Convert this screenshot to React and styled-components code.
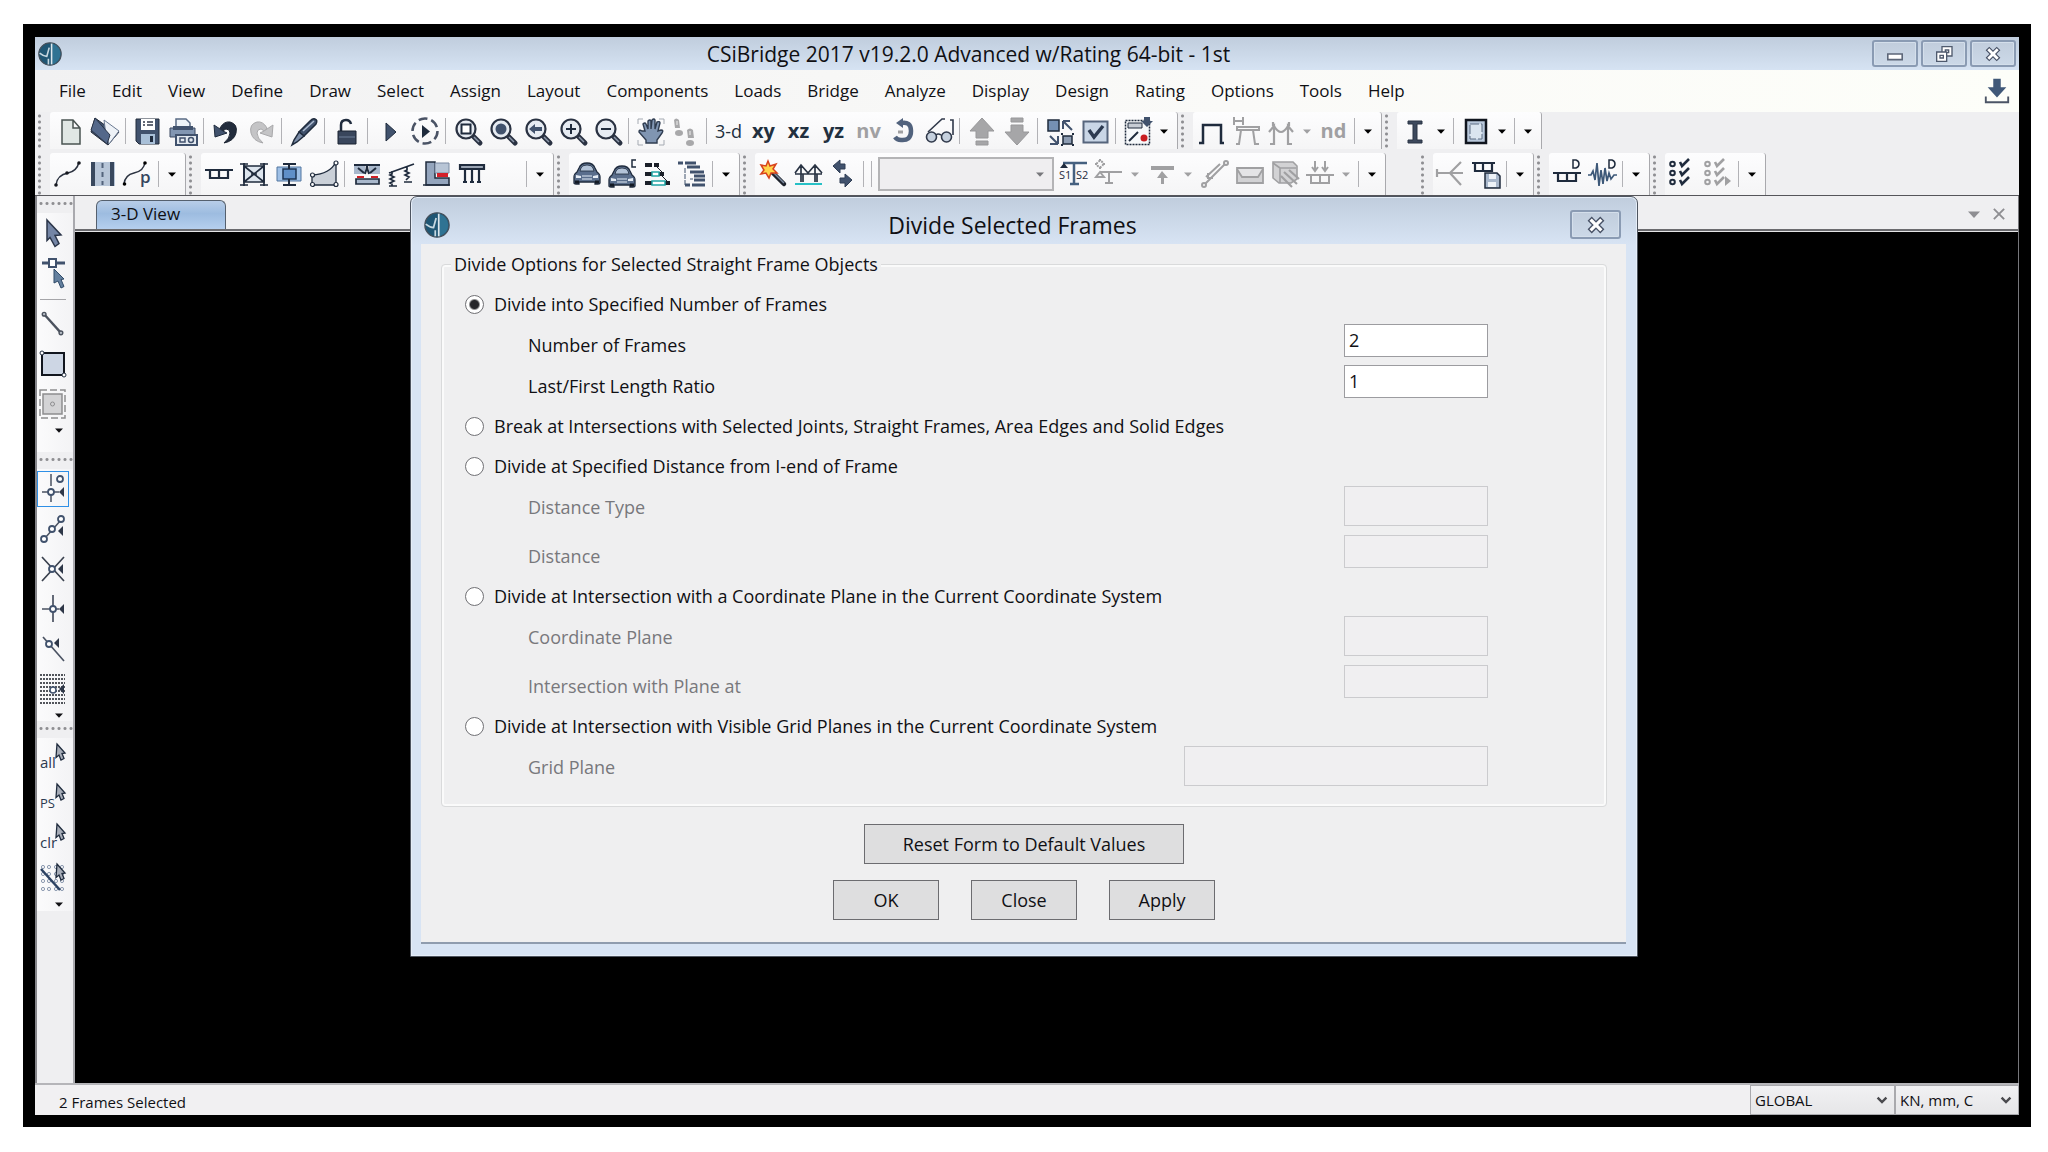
import React, { useState } from 'react';
import styled, { createGlobalStyle, css } from 'styled-components';

const ink = '#1f2b3d';
const navy = '#41526d';
const steel = '#a9b8cc';
const grey = '#a0a0a2';

const GlobalStyle = createGlobalStyle`
    * { box-sizing: border-box; }
    body {
        margin: 0;
        background: #fff;
        color: #101014;
        font-family: "Open Sans", "Noto Sans", sans-serif;
        font-size: 17px;
    }
    button, input, select { font: inherit; color: inherit; }
`

/* ---------- icons, all on a 30 x 30 grid ---------- */

const lens = (
    <>
        <path d="M20 20l7 7" stroke="#2a3242" strokeWidth="5" strokeLinecap="round" />
        <path d="M21 21l5 5" stroke="#8b97aa" strokeWidth="1.5" />
        <circle cx="13" cy="13" r="9.5" fill="#e6ebf2" stroke="#2a3242" strokeWidth="2.2" />
    </>
)
const car = (
    <>
        <path d="M7 9q2-5 8-5t8 5l2 4q3 2 3 5v6q0 1-2 1h-3v-2H7v2H4q-2 0-2-1v-6q0-3 3-5z" fill="#5a6e8c" stroke={ink} strokeWidth="1.300" />
        <path d="M9 9q1-3 6-3t6 3l1 3H8z" fill="#b3c3d8" stroke={ink} strokeWidth=".8" />
        <path d="M4 16l5 1v2H4zM26 16l-5 1v2h5z" fill="#e6edf5" />
        <path d="M10 17h10M10 20h10" stroke="#b6c3d4" strokeWidth="1.300" />
        <path d="M3 23h4M23 23h4" stroke="#141a24" strokeWidth="3" />
    </>
)
const deck = (
    <g fill="none" stroke={ink} strokeWidth="2.2">
        <path d="M1 11h28M6 11v8h18v-8M15 11v8" />
    </g>
)
const cursor = <path d="M19 1l8 9-3 .5 2 5-3 1.500-2-5-3 2.500z" fill="#a7adb8" stroke={ink} strokeWidth="1.3" />
const tri = x => <path d={`M${x} 15l5-5v10z`} fill="#2e3748" />
const checks = c => (
    <g fill="none" stroke={c} strokeWidth="2">
        {[5, 14, 23].map(y => (
            <g key={y}>
                <circle cx="4.500" cy={y} r="2.300" />
                <path d={`M12 ${y - 2}l2 4 7-7`} strokeWidth="2.600" />
            </g>
        ))}
    </g>
)

const icons = {
    file: <path d="M7 4h11l7 8v16H7zM18 4v8h7" fill="#e0e7e4" stroke="#4a5452" strokeWidth="1.500" />,
    open: (
        <>
            <path d="M5 2l14 10 10 4-11 13L1 16z" fill={navy} stroke="#232c3b" />
            <path d="M14 4l15 11-10 13-3-9z" fill="#eef2f7" stroke="#6b7a92" />
            <path d="M5 2L1 14l16 14 3-9z" fill="#54688a" stroke="#2a3548" />
        </>
    ),
    save: (
        <>
            <path d="M3 3h23v25H6l-3-3z" fill={navy} stroke="#222c3c" />
            <path d="M8 3h14v11H8z" fill="#fff" />
            <path d="M10 6h2m2 0h6M10 9h2m2 0h6" stroke="#30394a" strokeWidth="1.500" />
            <path d="M8 18h14v10H8z" fill="#a9c0d8" />
            <path d="M17 20h3v6h-3z" fill={ink} />
        </>
    ),
    print: (
        <>
            <path d="M8 13V3h10l4 4v6" fill="#eef3f8" stroke="#5a6b84" strokeWidth="1.500" />
            <path d="M2 12h25v9H2z" fill="#8296b2" stroke="#3a4960" />
            <path d="M5 10h20v4H5z" fill={navy} />
            <path d="M8 19h21v10H8z" fill="#e4eaf1" stroke={navy} strokeWidth="2" />
            <path d="M12 22h5v4h-5z" fill="none" stroke={navy} strokeWidth="1.500" />
            <circle cx="23" cy="24" r="2.500" fill="none" stroke={navy} strokeWidth="1.500" />
        </>
    ),
    undo: (
        <>
            <path d="M9 12q4-7 10-6 8 2 6 11-2 8-12 10 6-5 6-10 0-4-4-4-2 0-3 3z" fill="#222c3c" stroke="#1a2230" />
            <path d="M3 9l1 12 12-4-4-2-3-2z" fill={navy} stroke={ink} />
        </>
    ),
    redo: (
        <>
            <path d="M21 12q-4-7-10-6-8 2-6 11 2 8 12 10-6-5-6-10 0-4 4-4 2 0 3 3z" fill="#c4c4c6" stroke="#a9a9ab" />
            <path d="M27 9l-1 12-12-4 4-2 3-2z" fill="#c4c4c6" stroke="#a9a9ab" />
        </>
    ),
    pen: (
        <>
            <path d="M26 3q3 1 1 5L15 20l-5-4L21 5q3-3 5-2z" fill={navy} stroke={ink} strokeWidth="1.500" />
            <path d="M10 16l5 4-7 6-5 3 2-5z" fill="#7c8da8" stroke={ink} strokeWidth="1.500" />
            <path d="M14 15L25 5" stroke="#aebdd2" strokeWidth="1.500" />
        </>
    ),
    lock: (
        <>
            <path d="M9 15V9q0-5 5-5 4 0 5 4" fill="none" stroke={ink} strokeWidth="2.500" />
            <path d="M6 15h18v13H6z" fill="#39465c" stroke="#1a2230" />
            <path d="M7 21h16" stroke="#6f7f98" />
        </>
    ),
    play: <path d="M11 7l10 9-10 9z" fill={navy} stroke={ink} />,
    playRing: (
        <>
            <circle cx="15" cy="15" r="12.500" fill="none" stroke="#4a5365" strokeWidth="2.500" strokeDasharray="9 4" />
            <path d="M12 9l8 6.500-8 6.500z" fill={ink} />
        </>
    ),
    zoomBox: <>{lens}<path d="M8.500 8.500h9v9h-9z" fill="#fff" stroke={ink} strokeWidth="2" /></>,
    zoomDot: <>{lens}<circle cx="13" cy="13" r="5.500" fill={navy} /></>,
    zoomBack: <>{lens}<path d="M6 13l6-5v3h7v4h-7v3z" fill={navy} /></>,
    zoomIn: <>{lens}<path d="M8 13h10M13 8v10" stroke={ink} strokeWidth="2" /></>,
    zoomOut: <>{lens}<path d="M8 13h10" stroke={ink} strokeWidth="2" /></>,
    hand: (
        <>
            <path d="M2 8V3h5M23 3h5v5M28 24v5h-5M7 29H2v-5" fill="none" stroke="#a5aab2" />
            <path d="M9 15L7 8q2-2 3 0l2 5V5q2-2 3 0v8l1-9q2-2 3 0v9l2-7q3-1 3 1l-2 8 3-1q3 0 1 3l-5 7v3H10v-3l-7-8q0-3 3-1z" fill="#8095b2" stroke="#2f3c50" strokeWidth="1.400" />
        </>
    ),
    feet: (
        <g fill="#a8a8aa">
            <path d="M3 4q2-3 5 0l1 8H4zM16 14q3-3 6 0l1 8h-6z" />
            <ellipse cx="8" cy="17" rx="4" ry="3" />
            <ellipse cx="19" cy="27" rx="4" ry="3" />
            <path d="M6 5v4M19 15v4" stroke="#f0f0f0" />
        </g>
    ),
    rotate: (
        <>
            <path d="M12 7q10-2 10 8t-10 9q-4 0-6-3" fill="none" stroke="#51627d" strokeWidth="4.500" />
            <path d="M14 2v10L7 7z" fill="#51627d" />
            <path d="M9 16h5" stroke={grey} strokeWidth="3" />
        </>
    ),
    glasses: (
        <g stroke="#30394a" strokeWidth="1.600">
            <path d="M4 16L18 3h3M29 19V4h-3M12 19q2-2 5 0" fill="none" />
            <circle cx="7.500" cy="21" r="5" fill="#c6d1de" />
            <circle cx="22.500" cy="21" r="5" fill="#c6d1de" />
        </g>
    ),
    up: (
        <g fill="#a6a6a8" stroke="#98989a">
            <path d="M15 2l12 13h-6v7H9v-7H3z" />
            <path d="M9 25h12v4H9z" />
        </g>
    ),
    down: (
        <g fill="#a6a6a8" stroke="#98989a">
            <path d="M15 29l12-13h-6V9H9v7H3z" />
            <path d="M9 2h12v4H9z" />
        </g>
    ),
    assign: (
        <>
            <path d="M3 4h11v11H3z" fill="#7590b3" stroke={ink} strokeWidth="1.500" />
            <path d="M18 20h9v8h-9z" fill="#8d9cb2" stroke={ink} strokeWidth="1.500" />
            <path d="M18 5h7M18 5v8M19 6l8 8M5 20l8 8M13 28H5M13 28v-8" fill="none" stroke={navy} strokeWidth="2" />
            <path d="M16 18h2M27 18h2M16 29h2M27 29h2" stroke={ink} strokeWidth="2" />
        </>
    ),
    check: (
        <>
            <path d="M3.500 5.500h24v21h-24z" fill="#c9d6e6" stroke="#56657c" strokeWidth="2" />
            <path d="M9 14l5 7 9-11" fill="none" stroke="#2c3a50" strokeWidth="3.500" />
        </>
    ),
    display: (
        <>
            <path d="M2.500 4.500h24v24h-24z" fill="#f7f9fb" stroke={ink} strokeWidth="1.500" strokeDasharray="2 1" />
            <path d="M5 7h14v5H5z" fill="#c7ccd4" stroke={ink} />
            <path d="M6 25l9-9" stroke={ink} strokeWidth="2" />
            <circle cx="21" cy="22" r="3.500" fill="#c81e22" />
            <path d="M21 1h6v4h3l-6 6-6-6h3z" fill={navy} />
        </>
    ),
    portal: <path d="M3 27h4V9h18v18h3" fill="none" stroke={ink} strokeWidth="2.500" />,
    portalDim: (
        <g fill="none" stroke={grey} strokeWidth="2">
            <path d="M5 28h3l2-14h12l2 14h4M6 11h22v3H6z" />
            <path d="M3 1v8M12 1v8M3 5h9" />
        </g>
    ),
    portalSag: <path d="M4 28h4V10L3 16M26 28h-4V10l5 6M8 10q7 12 14 0M7 6v4M23 6v4" fill="none" stroke={grey} strokeWidth="2.200" />,
    ibeam: <path d="M8 5h14v3h-5v16h5v3H8v-3h5V8H8z" fill="#3d495c" stroke="#2a3444" />,
    plate: (
        <>
            <path d="M5 4h20v23H5z" fill="#b9c8db" stroke="#10151e" strokeWidth="2.500" />
            <path d="M9 8h12v15H9z" fill="#dbe5ef" stroke="#5d6c82" strokeDasharray="9 2" />
        </>
    ),
    curve: (
        <>
            <path d="M3 26q1-10 12-12 9-2 11-11" fill="none" stroke="#2b3240" strokeWidth="1.500" />
            <g fill="#16181f"><circle cx="3" cy="26" r="1.800" /><circle cx="14" cy="14" r="1.800" /><circle cx="26" cy="4" r="1.800" /></g>
        </>
    ),
    road: (
        <>
            <path d="M3 3h24v24H3z" fill="#b8c6d8" />
            <path d="M5 3v24M24 3v24" stroke="#39485e" strokeWidth="4" />
            <path d="M14.500 4v22" stroke="#53637b" strokeWidth="2" strokeDasharray="5 4" />
        </>
    ),
    curveP: (
        <>
            <path d="M1 25q1-9 10-11 10-2 11-11" fill="none" stroke="#2b3240" strokeWidth="1.500" />
            <circle cx="1.500" cy="25" r="1.800" /><circle cx="22" cy="4" r="1.800" />
            <text x="17" y="24" fontSize="17" fontWeight="600" fill="#35455e">p</text>
        </>
    ),
    deck,
    brace: (
        <g fill="none" stroke={ink} strokeWidth="1.700">
            <path d="M5 7h20v16H5zM5 7l20 16M25 7L5 23" fill="#dde5ee" />
            <path d="M5 4v23M25 4v23M1 5h8M21 5h8M1 26h8M21 26h8M12 15h6" />
        </g>
    ),
    segment: (
        <>
            <path d="M3 8h24v14H3z" fill="#9fc0e6" stroke="#5376a0" />
            <path d="M9 10h13v10H9z" fill="#5f8fc8" stroke="#1d3454" strokeWidth="1.500" />
            <path d="M9 5h13M9 26h13M15 5v5M15 20v6" stroke={ink} strokeWidth="2" />
        </>
    ),
    haunch: (
        <>
            <path d="M3 16q18-1 24-13v23H3z" fill="#cad0d8" stroke={ink} strokeWidth="1.300" />
            <g fill="#fff" stroke={ink} strokeWidth="1.200"><circle cx="3.500" cy="16" r="2" /><circle cx="27" cy="4" r="2" /><circle cx="3.500" cy="25.500" r="2" /><circle cx="27" cy="25.500" r="2" /></g>
        </>
    ),
    bearing: (
        <>
            <path d="M2 6h11v9H2zM17 6h11v9H17z" fill={steel} />
            <path d="M2 6h26M13 15q2-5 2-9 0 4 2 9M6 9l6 5M24 9l-6 5" fill="none" stroke={ink} strokeWidth="2" />
            <path d="M5 17h7v2H5zM19 17h7v2h-7z" fill="#cf2027" />
            <path d="M4 20h23v5H4z" fill={steel} stroke={ink} strokeWidth="1.700" />
        </>
    ),
    springs: <path d="M2 14L27 5M5 12v3l-2 1 4 2-4 2 4 2-4 2 2 1v2M20 8v3l-2 1 4 2-4 2 4 2-3 3M2 27h8M17 23h8" fill="none" stroke={ink} strokeWidth="1.700" />,
    abutment: (
        <>
            <path d="M4 3h9v16h14v7H4z" fill="#94a5bd" stroke={ink} strokeWidth="1.500" />
            <path d="M13 4h14v10H13z" fill="#b8c5d6" stroke="#7a8aa2" />
            <path d="M15 14h11v4H15z" fill="#d4202a" />
            <path d="M1 26h27" stroke={ink} strokeWidth="1.500" />
        </>
    ),
    bent: <path d="M3 6h24v4H3zM8 10v13M15 10v13M22 10v13M6 23h4M13 23h4M20 23h4" fill="#9aa4b3" stroke={ink} strokeWidth="2.200" />,
    car,
    carC: <><g transform="translate(0 3)">{car}</g><path d="M29 1h-4v7h4" fill="none" stroke={ink} strokeWidth="1.500" /></>,
    tree: (
        <>
            <path d="M3 4h7v4H3zM3 13h7v4H3zM3 22h7v4H3zM12 4h5v4h-5zM17 13h5v4h-5zM23 22h5v4h-5z" fill="#1b2029" />
            <path d="M10 13h7v4h-7zM10 22h13v4H10z" fill="#fff" stroke="#20a5a5" strokeWidth="1.500" />
            <path d="M15 8l5 5M20 17l5 5" stroke="#1b2029" />
        </>
    ),
    steps: (
        <g fill="none" stroke={navy}>
            <path d="M1 4h5M8 4h11M10 8h13M13 13h14M17 17h11M17 21h11M8 26h5M15 26h13" strokeWidth="2.800" />
            <path d="M8 9v17M13 20h3" strokeDasharray="5 1" />
        </g>
    ),
    wand: (
        <>
            <path d="M14 13l12 12" stroke="#1d222c" strokeWidth="4.500" strokeLinecap="round" />
            <path d="M15 13l11 11" stroke="#7d8ba0" strokeWidth="1.500" />
            <path d="M10 2l2 5 6-2-3 5 4 4-6 0-2 5-3-5-5 1 3-4-3-5 5 1z" fill="#ffd34a" stroke="#d8431d" strokeWidth="1.500" />
        </>
    ),
    bridge: (
        <>
            <path d="M2 15h27M8 6v17M22 6v17M2 14l6-8 7 8 7-8 7 8M10 15v8M24 15v8" fill="none" stroke="#2a3444" strokeWidth="1.700" />
            <path d="M2 25h27" stroke="#27c0c6" strokeWidth="2" />
        </>
    ),
    swap: <path d="M5 7l7-6v4h5v5h-5v4zM24 21l-7-6v4h-5v5h5v4z" fill={navy} stroke="#2f3d54" />,
    s1s2: (
        <>
            <path d="M4 4h24M15 4v20M11 25h9" stroke="#45607f" strokeWidth="2.500" />
            <path d="M1 9h8L5 4z" fill={ink} />
            <text x="0" y="20" fontSize="11" fill={ink}>S1</text>
            <text x="17" y="20" fontSize="11" fill={ink}>S2</text>
        </>
    ),
    supportNew: (
        <g fill="none" stroke={grey} strokeWidth="2">
            <circle cx="6" cy="5" r="3" strokeDasharray="2 1" /><path d="M6 0v2M6 8v2M1 5h2M9 5h2M6 13h22M15 13v10M11 24h8M2 18h8l-4-5z" />
        </g>
    ),
    pushUp: <g fill={grey}><path d="M4 7h23v4H4z" /><path d="M15 12l6 7h-4v6h-3v-6h-4z" /></g>,
    link: (
        <g fill="none" stroke={grey} strokeWidth="2">
            <path d="M5 25L25 5M6 18l14-13M8 14v5h5" /><circle cx="4" cy="26" r="2" /><circle cx="26" cy="4" r="2" />
        </g>
    ),
    tendon: (
        <g fill="#d2d2d4" stroke={grey} strokeWidth="1.800">
            <path d="M2 9h26v15H2z" /><path d="M2 10l5 8h16l5-8" fill="#e4e4e6" />
        </g>
    ),
    block: (
        <g fill="#d2d2d4" stroke={grey} strokeWidth="1.600">
            <path d="M3 8V3h20l4 4v13l-6 4H9l-6-5z" /><path d="M3 4l7 5v15M10 9h16" fill="none" /><path d="M14 13l13 12M11 17l11 11M19 11l10 9" strokeWidth="2.200" />
        </g>
    ),
    loadDown: <path d="M1 16h28M6 16v8h18v-8M15 16v8M10 2v9M20 2v9M7 8l3 4 3-4M17 8l3 4 3-4" fill="none" stroke={grey} strokeWidth="2" />,
    fork: <path d="M1 14h13L25 3M14 14l11 12M14 14h13M1 10v8" fill="none" stroke={grey} strokeWidth="2.200" />,
    deckSave: (
        <>
            <path d="M1 4h23M4 4v8h17V4M12 4v8" fill="none" stroke={ink} strokeWidth="2.200" />
            <path d="M14 14h12l3 3v12H14z" fill={steel} stroke={ink} strokeWidth="1.500" />
            <path d="M18 15h7v5h-7zM17 23h8v5h-8z" fill="#eef3f8" />
        </>
    ),
    deckD: <><g transform="translate(0 3)">{deck}</g><path d="M21 1h3q3 1 3 4t-3 4h-3z" fill="none" stroke={ink} strokeWidth="1.500" /></>,
    waveD: (
        <>
            <path d="M1 16h3l2-4 2 9 2-17 2 23 2-16 2 14 2-16 2 13 2-8 2 6 3-4h3" fill="none" stroke="#3d5878" strokeWidth="1.700" />
            <path d="M22 1h3q3 1 3 4t-3 4h-3z" fill="none" stroke={ink} strokeWidth="1.500" />
        </>
    ),
    checks: checks(ink),
    checksDim: <>{checks(grey)}<path d="M22 17l6 5-6 5z" fill={grey} /></>,

    select: <path d="M9 2l14 15-6 .5 4 8-4 3-5-9-3 3z" fill="#7485a5" stroke="#2a3448" strokeWidth="1.500" />,
    reshape: (
        <>
            <path d="M4 5h23" stroke={navy} strokeWidth="3" />
            <path d="M11 1h7v8h-7z" fill="#fff" stroke={navy} strokeWidth="2" />
            <path d="M16 11l10 10-3 .5 3 7-3 1.500-3-7-4 2z" fill="#64809f" stroke="#2f4a68" />
        </>
    ),
    frame: (
        <g stroke="#4b525e" strokeWidth="2.500">
            <path d="M6 5l17 19" /><g fill="#b7bdc6" strokeWidth="1.500"><circle cx="5.500" cy="4.500" r="2" /><circle cx="23.500" cy="24.500" r="2" /></g>
        </g>
    ),
    area: (
        <>
            <path d="M4 4h22v22H4z" fill="#cdd6e4" stroke="#12161e" strokeWidth="2" />
            <g fill="#fff" stroke={ink}><circle cx="4" cy="4" r="2" /><circle cx="26" cy="26" r="2" /></g>
        </>
    ),
    areaDim: (
        <>
            <path d="M2 1h25v28H2z" fill="none" stroke="#8d8d8f" strokeWidth="1.500" strokeDasharray="7 3" />
            <path d="M5 5h19v20H5z" fill="#d3d3d5" stroke="#8d8d8f" strokeWidth="1.500" />
            <circle cx="14.500" cy="15" r="2" fill="none" stroke="#8d8d8f" />
        </>
    ),
    snapJoint: (
        <>
            <path d="M13 0v12M13 20v8M4 18h6M16 18h5" stroke="#4a5262" strokeWidth="1.500" />
            <g fill="#fff" stroke={navy} strokeWidth="1.800"><circle cx="13" cy="18" r="3" /><circle cx="22" cy="5" r="3" /></g>
            <g transform="translate(0 3)">{tri(21)}</g>
        </>
    ),
    snapEnds: (
        <>
            <path d="M7 24l16-18" stroke="#4a5262" strokeWidth="1.500" />
            <g fill="#fff" stroke={navy} strokeWidth="1.800"><circle cx="6" cy="25" r="3" /><circle cx="14" cy="15" r="3" /><circle cx="23" cy="5" r="3" /></g>
            <g transform="translate(0 2)">{tri(20)}</g>
        </>
    ),
    snapCross: <><path d="M4 3l22 24M26 3L4 27" stroke="#3b424f" strokeWidth="1.700" /><circle cx="14" cy="15" r="3" fill="#fff" stroke={navy} strokeWidth="1.800" />{tri(20)}</>,
    snapPerp: <><path d="M4 15h8M15 1v27M18 15h3" stroke="#4a5262" strokeWidth="1.700" /><circle cx="15" cy="15" r="3" fill="#fff" stroke={navy} strokeWidth="1.800" />{tri(21)}</>,
    snapLine: <><path d="M5 3l21 24" stroke="#4a5262" strokeWidth="1.700" /><circle cx="11" cy="10" r="3" fill="#fff" stroke={navy} strokeWidth="1.800" /><g transform="translate(0 -6)">{tri(16)}</g></>,
    snapGrid: (
        <>
            <g stroke="#1b1f27" strokeWidth="1.400" strokeDasharray="2 1">
                {[1, 5, 9, 13, 17, 21, 25, 29].map(y => <path key={y} d={`M2 ${y}h25`} />)}
            </g>
            <circle cx="15" cy="16" r="3" fill="#fff" stroke={navy} strokeWidth="1.500" />{tri(21)}
        </>
    ),
    all: <>{cursor}<text x="2" y="25" fontSize="15" fill="#2c3a50">all</text></>,
    ps: <>{cursor}<text x="2" y="25" fontSize="13" fill="#2c3a50">PS</text></>,
    clr: <>{cursor}<text x="2" y="25" fontSize="15" fill="#2c3a50">clr</text></>,
    deselect: (
        <>
            <g fill="none" stroke="#8c9ab0">
                {[4, 11, 18, 26].map(y => [5, 11, 18, 24].map(x => <circle key={x + '-' + y} cx={x} cy={y} r="1.600" />))}
            </g>
            <path d="M3 6l19 21" stroke="#2c4262" strokeWidth="2.500" />
            {cursor}
        </>
    ),
    logo: (
        <>
            <circle cx="15" cy="15" r="14" fill="#1f5674" stroke="#46515c" strokeWidth="1.500" />
            <path d="M18 2q10 4 10 13t-10 13z" fill="#2f7393" />
            <path d="M17 2v26" stroke="#dce8ee" strokeWidth="2" />
            <path d="M2 14q5 4 9 4L14 7M13 21v7" fill="none" stroke="#c6d8e1" strokeWidth="2" />
        </>
    ),
    min: <path d="M6 15h18v7H6z" fill="#fff" stroke="#5c6678" strokeWidth="2" />,
    restore: (
        <g fill="#fff" stroke="#4f5a6d" strokeWidth="2">
            <path d="M12 4h15v14H12z" /><path d="M17 9h5v4h-5z" /><path d="M4 12h15v14H4z" /><path d="M9 17h5v4H9z" />
        </g>
    ),
    close: (
        <>
            <path d="M7 7l16 16M23 7L7 23" stroke="#465064" strokeWidth="11" strokeLinecap="square" />
            <path d="M7 7l16 16M23 7L7 23" stroke="#fff" strokeWidth="6" strokeLinecap="square" />
        </>
    ),
    download: (
        <>
            <path d="M11 2h8v9h6L15 22 5 11h6z" fill="#405878" />
            <path d="M3 21v6h24v-6" fill="none" stroke="#4c5566" strokeWidth="2" />
        </>
    ),
    thinX: <path d="M4 4l22 22M26 4L4 26" stroke="#8e8e92" strokeWidth="4" />,
    caret: <path d="M0 9h30L15 25z" fill="currentColor" />,
    chevron: <path d="M4 9l11 11L26 9" fill="none" stroke="#4a4a4e" strokeWidth="6" />,
}

const Icon = ({ name, size = 30 }) => (
    <svg width={size} height={size} viewBox="0 0 30 30" overflow="visible" aria-hidden="true">{icons[name]}</svg>
)

/* ---------- toolbar contents ---------- */
// '|' separator, 'v' drop-down arrow, 'v-' disabled arrow, '_' empty slot, '=text' text button

const topRow = [
    ['file', 'open', '|', 'save', 'print', '|', 'undo', 'redo', '|', 'pen', '|', 'lock', '|', 'play', 'playRing', '|',
        'zoomBox', 'zoomDot', 'zoomBack', 'zoomIn', 'zoomOut', '|', 'hand', 'feet', '|', '=3-d', '=xy', '=xz', '=yz', '=nv',
        'rotate', 'glasses', '|', 'up', 'down', '|', 'assign', 'check', '|', 'display', 'v'],
    ['portal', 'portalDim', 'portalSag', 'v-', '=nd', '|', 'v'],
    ['ibeam', 'v', '|', 'plate', 'v', '|', 'v'],
]

const bottomRow = [
    ['curve', 'road', 'curveP', '|', 'v'],
    ['deck', 'brace', 'segment', 'haunch', '|', 'bearing', 'springs', 'abutment', 'bent', '_', '|', 'v'],
    ['car', 'carC', 'tree', 'steps', '|', 'v'],
    ['wand', 'bridge', 'swap', '|', '|', 'combo', 's1s2', 'supportNew', 'v-', 'pushUp', 'v-', 'link', 'tendon', 'block', 'loadDown', 'v-', '|', 'v'],
    ['fork', 'deckSave', '|', 'v'],
    ['deckD', 'waveD', '|', 'v'],
    ['checks', 'checksDim', '|', 'v'],
]

const menus = ['File', 'Edit', 'View', 'Define', 'Draw', 'Select', 'Assign', 'Layout', 'Components', 'Loads', 'Bridge',
    'Analyze', 'Display', 'Design', 'Rating', 'Options', 'Tools', 'Help']

const options = [
    { id: 'number', label: 'Divide into Specified Number of Frames', fields: [
        { label: 'Number of Frames', value: '2' },
        { label: 'Last/First Length Ratio', value: '1' },
    ] },
    { id: 'break', label: 'Break at Intersections with Selected Joints, Straight Frames, Area Edges and Solid Edges', fields: [] },
    { id: 'distance', label: 'Divide at Specified Distance from I-end of Frame', fields: [
        { label: 'Distance Type', select: true },
        { label: 'Distance', value: '' },
    ] },
    { id: 'plane', label: 'Divide at Intersection with a Coordinate Plane in the Current Coordinate System', fields: [
        { label: 'Coordinate Plane', select: true },
        { label: 'Intersection with Plane at', value: '' },
    ] },
    { id: 'grid', label: 'Divide at Intersection with Visible Grid Planes in the Current Coordinate System', fields: [
        { label: 'Grid Plane', select: true, wide: true },
    ] },
]

const Items = ({ items }) => items.map((item, i) => {
    if (item === '|') return <Separator key={i} />
    if (item === '_') return <Slot key={i} />
    if (item === 'combo') return <Combo key={i}><select disabled aria-label="Stage" /><Icon name="caret" size={8} /></Combo>
    if (item[0] === 'v') return <Drop key={i} $off={item === 'v-'} aria-label="More"><Icon name="caret" size={8} /></Drop>
    if (item[0] === '=') {
        const text = item.slice(1)
        return <TextTool key={i} $off={text[0] === 'n'} $light={text === '3-d'}>{text}</TextTool>
    }
    return <Tool key={i} aria-label={item}><Icon name={item} /></Tool>
})

const Row = ({ groups, push, lead }) => (
    <ToolRow>
        {groups.map((items, i) => (
            <React.Fragment key={i}>
                <Grip $push={i === push} />
                <Band $lead={lead && i === 0}><Items items={items} /></Band>
            </React.Fragment>
        ))}
    </ToolRow>
)

const Field = ({ field, enabled }) => {
    const id = field.label.replace(/\W+/g, '-').toLowerCase()
    return (
        <FieldRow $tall={field.select}>
            <FieldLabel htmlFor={id} $off={!enabled}>{field.label}</FieldLabel>
            {field.select
                ? <PlainSelect id={id} disabled={!enabled} $wide={field.wide} />
                : <TextBox id={id} defaultValue={field.value} disabled={!enabled} />}
        </FieldRow>
    )
}

const DivideDialog = () => {
    const [mode, setMode] = useState('number')
    return (
        <Overlay>
            <Dialog role="dialog" aria-labelledby="dialog-title">
                <DialogTitle>
                    <Icon name="logo" size={26} />
                    <h2 id="dialog-title">Divide Selected Frames</h2>
                    <DialogClose aria-label="Close dialog"><Icon name="close" size={16} /></DialogClose>
                </DialogTitle>
                <DialogBody>
                    <Group>
                        <legend>Divide Options for Selected Straight Frame Objects</legend>
                        {options.map(o => (
                            <React.Fragment key={o.id}>
                                <RadioRow>
                                    <Radio type="radio" name="mode" checked={mode === o.id} onChange={() => setMode(o.id)} />
                                    {o.label}
                                </RadioRow>
                                {o.fields.map(f => <Field key={f.label} field={f} enabled={mode === o.id} />)}
                            </React.Fragment>
                        ))}
                    </Group>
                    <PushButton $wide>Reset Form to Default Values</PushButton>
                    <ButtonRow>
                        <PushButton>OK</PushButton>
                        <PushButton>Close</PushButton>
                        <PushButton>Apply</PushButton>
                    </ButtonRow>
                </DialogBody>
            </Dialog>
        </Overlay>
    )
}

const App = () => {
    return (
        <>
            <GlobalStyle />
            <Page>
                <Window>
                    <TitleBar>
                        <Icon name="logo" size={24} />
                        <h1>CSiBridge 2017 v19.2.0 Advanced w/Rating 64-bit - 1st</h1>
                        <WindowButtons>
                            <WindowButton aria-label="Minimize"><Icon name="min" size={24} /></WindowButton>
                            <WindowButton aria-label="Restore"><Icon name="restore" size={20} /></WindowButton>
                            <WindowButton aria-label="Close"><Icon name="close" size={14} /></WindowButton>
                        </WindowButtons>
                    </TitleBar>
                    <MenuBar>
                        {menus.map(m => <MenuItem key={m}>{m}</MenuItem>)}
                        <Download aria-label="Download"><Icon name="download" size={28} /></Download>
                    </MenuBar>
                    <Row groups={topRow} lead />
                    <Row groups={bottomRow} push={4} />
                    <Main>
                        <SideBar>
                            <SideGrip />
                            <SideTool aria-label="Select"><Icon name="select" /></SideTool>
                            <SideTool aria-label="Reshape"><Icon name="reshape" /></SideTool>
                            <SideRule />
                            <SideTool aria-label="Draw frame"><Icon name="frame" size={28} /></SideTool>
                            <SideTool aria-label="Draw area"><Icon name="area" /></SideTool>
                            <SideTool aria-label="Quick area"><Icon name="areaDim" /></SideTool>
                            <SideDrop aria-label="More drawing tools" $space><Icon name="caret" size={8} /></SideDrop>
                            <SideGrip />
                            <SideTool $on aria-label="Snap to joints"><Icon name="snapJoint" /></SideTool>
                            {['snapEnds', 'snapCross', 'snapPerp', 'snapLine', 'snapGrid'].map(n => (
                                <SideTool key={n} aria-label={n}><Icon name={n} /></SideTool>
                            ))}
                            <SideDrop aria-label="More snaps"><Icon name="caret" size={8} /></SideDrop>
                            <SideGrip />
                            {['all', 'ps', 'clr', 'deselect'].map(n => (
                                <SideTool key={n} aria-label={n}><Icon name={n} /></SideTool>
                            ))}
                            <SideDrop aria-label="More selections"><Icon name="caret" size={8} /></SideDrop>
                        </SideBar>
                        <View>
                            <TabStrip>
                                <Tab>3-D View</Tab>
                                <StripTools>
                                    <PlainButton aria-label="Window list"><Icon name="caret" size={12} /></PlainButton>
                                    <PlainButton aria-label="Close view"><Icon name="thinX" size={14} /></PlainButton>
                                </StripTools>
                            </TabStrip>
                            <Canvas />
                        </View>
                        <DivideDialog />
                    </Main>
                    <StatusBar>
                        <StatusText>2 Frames Selected</StatusText>
                        <StatusSelect $width="145px">
                            <select aria-label="Coordinate system" defaultValue="GLOBAL"><option>GLOBAL</option></select>
                            <Icon name="chevron" size={12} />
                        </StatusSelect>
                        <StatusSelect $width="124px">
                            <select aria-label="Units" defaultValue="KN, mm, C"><option>KN, mm, C</option></select>
                            <Icon name="chevron" size={12} />
                        </StatusSelect>
                    </StatusBar>
                </Window>
            </Page>
        </>
    )
}

const glass = 'linear-gradient(#c0cddd, #d6e3f3)'

const Page = styled.div`
    display: flex;
    min-height: 100vh;
    padding: 24px 17px 25px 23px;
`

const Window = styled.div`
    flex: 1;
    min-width: 0;
    display: flex;
    flex-direction: column;
    background: #efeff1;
    border: 12px solid #000;
    border-top-width: 13px;
`

const TitleBar = styled.header`
    display: grid;
    grid-template-columns: 160px 1fr 160px;
    align-items: center;
    height: 33px;
    padding: 0 3px;
    background: ${glass};
    h1 {
        margin: 0;
        padding-right: 117px;
        text-align: center;
        font-size: 21px;
        line-height: 32px;
        font-weight: 400;
    }
`

const WindowButtons = styled.div`
    display: flex;
    justify-content: flex-end;
    gap: 3px;
`

const WindowButton = styled.button`
    width: 46px;
    height: 27px;
    display: flex;
    justify-content: center;
    align-items: center;
    padding: 0;
    border: 2px solid #8a9bb3;
    border-radius: 3px;
    background: linear-gradient(#c1cddc, #ccd9e8);
    box-shadow: inset 0 0 0 1px #d4dfeb;
`

const DialogClose = styled(WindowButton)`
    width: 51px;
    height: 29px;
`

const MenuBar = styled.nav`
    display: flex;
    align-items: center;
    gap: 26px;
    height: 42px;
    padding: 0 8px 0 24px;
    background: linear-gradient(90deg, #f1f1f2, #fafaf8 60%, #fdfef9);
`

const PlainButton = styled.button`
    display: flex;
    align-items: center;
    padding: 0;
    border: none;
    background: none;
`

const MenuItem = styled(PlainButton)`
    line-height: 24px;
`

const Download = styled(PlainButton)`
    margin-left: auto;
`

const ToolRow = styled.div`
    display: flex;
    height: 41px;
    padding-bottom: 4px;
    background: #efeff1;
    & + & {
        height: 43px;
        padding-bottom: 0;
        border-bottom: 1px solid #55555a;
    }
`

const Grip = styled.span`
    flex: none;
    width: 15px;
    margin-left: ${props => props.$push ? '32px' : '0'};
    background: radial-gradient(circle, #8e8e92 1px, transparent 2px) 1px 1px / 7px 6px;
    background-repeat: repeat-y;
`

const Band = styled.div`
    display: flex;
    align-items: center;
    padding: 0 4px 0 ${props => props.$lead ? '2px' : '0'};
    border-right: 1px solid #a9a9ad;
    border-radius: 3px 3px 0 0;
    background: linear-gradient(#fdfdfe, #f5f5f6);
`

const Separator = styled.span`
    flex: none;
    width: 1px;
    height: 26px;
    margin: 0 4px 0 3px;
    background: #b2b2b6;
`

const Tool = styled(PlainButton)`
    justify-content: center;
    width: 35px;
    height: 36px;
`

const TextTool = styled(Tool)`
    font-size: ${props => props.$light ? '18px' : '20px'};
    font-weight: ${props => props.$light ? 400 : 700};
    color: ${props => props.$off ? grey : '#22303f'};
    line-height: 24px;
`

const Slot = styled.span`
    width: 34px;
`

const Drop = styled(PlainButton)`
    justify-content: center;
    width: 18px;
    height: 36px;
    color: #000;
    ${props => props.$off && css`
        color: ${grey};
    `}
`

const Combo = styled.div`
    display: grid;
    grid-template-columns: 1fr 16px;
    align-items: center;
    width: 176px;
    height: 34px;
    margin: 0 2px;
    border: 2px solid #b4b4b6;
    background: #efeef0;
    color: #77777b;
    select {
        height: 28px;
        appearance: none;
        border: none;
        background: none;
    }
`

const Main = styled.main`
    position: relative;
    flex: 1;
    display: flex;
`

const SideBar = styled.div`
    width: 40px;
    display: flex;
    flex-direction: column;
    background: linear-gradient(90deg, #fbfbfc, #f3f3f5) no-repeat 0 0 / 100% 715px, #efeff1;
    border-left: 2px solid #85858a;
    border-right: 2px solid #a9a9ae;
`

const SideGrip = styled.span`
    height: 17px;
    background: radial-gradient(circle, #8e8e92 1px, transparent 2px) 1px 4px / 6px 7px repeat-x, #efeff1;
`

const SideTool = styled(PlainButton)`
    justify-content: center;
    width: 32px;
    height: 40px;
    ${props => props.$on && css`
        height: 36px;
        margin: 2px 0;
        border: 1px solid #2e8fe6;
    `}
`

const SideRule = styled.span`
    width: 26px;
    height: 1px;
    margin: 6px 3px 4px;
    background: #a5a5a9;
`

const SideDrop = styled(PlainButton)`
    align-self: flex-start;
    height: 12px;
    margin: 0 0 ${props => props.$space ? '16px' : '0'} 18px;
`

const View = styled.section`
    flex: 1;
    display: flex;
    flex-direction: column;
    border-right: 1px solid #77777b;
`

const TabStrip = styled.div`
    display: flex;
    align-items: flex-end;
    height: 35px;
    padding-left: 21px;
    border-bottom: 2px solid #6a6a6e;
`

const Tab = styled.button`
    width: 130px;
    height: 29px;
    padding: 0 0 2px 14px;
    text-align: left;
    line-height: 20px;
    border: 1px solid #55606e;
    border-bottom: none;
    border-radius: 6px 6px 0 0;
    background: linear-gradient(#b8cde8 0, #9dbce0 45%, #b5cfee);
`

const StripTools = styled.div`
    display: flex;
    gap: 12px;
    margin: 0 12px 8px auto;
    color: #8e8e92;
`

const Canvas = styled.div`
    flex: 1;
    border-top: 1px solid #e4e4e6;
    background: #000;
`

const StatusBar = styled.footer`
    display: flex;
    height: 32px;
    background: #f1f0f2;
    font-size: 15px;
    border-top: 2px solid #b5b5b9;
`

const StatusText = styled.span`
    flex: 1;
    padding-left: 24px;
    line-height: 34px;
`

const StatusSelect = styled.div`
    display: grid;
    grid-template-columns: 1fr 18px;
    align-items: center;
    width: ${props => props.$width};
    border: 1px solid #a9a9ad;
    background: linear-gradient(#f1f1f3, #e6e6e8);
    select {
        appearance: none;
        padding: 0 0 0 4px;
        border: none;
        background: none;
    }
`

const Overlay = styled.div`
    position: absolute;
    inset: 0;
    display: flex;
    justify-content: center;
    align-items: flex-start;
    padding-right: 6px;
`

const Dialog = styled.div`
    width: min(1228px, 100%);
    padding: 0 11px 12px 10px;
    border: 1px solid #4e5560;
    border-radius: 7px 7px 0 0;
    background: linear-gradient(#c0cddd, #d8e4f4 48px, #d8e4f4);
    box-shadow: inset 0 0 0 1px #e6eef8;
`

const DialogTitle = styled.div`
    display: grid;
    grid-template-columns: 52px 1fr 52px;
    align-items: center;
    height: 47px;
    padding: 8px 4px 0 3px;
    h2 {
        margin: 0;
        padding-right: 21px;
        text-align: center;
        font-size: 23px;
        line-height: 32px;
        font-weight: 400;
    }
`

const DialogBody = styled.form`
    display: flex;
    flex-direction: column;
    align-items: center;
    padding: 10px 19px 22px 20px;
    font-size: 18px;
    background: #efeff0;
    border-bottom: 2px solid #8f9cae;
`

const Group = styled.fieldset`
    align-self: stretch;
    min-width: 0;
    margin: 0 0 17px;
    padding: 10px 118px 11px 23px;
    border: 1px solid #d9dadb;
    border-radius: 4px;
    box-shadow: inset 0 0 0 2px #fafafa;
    legend {
        margin-left: -14px;
        padding: 0 3px;
        line-height: 20px;
        background: #efeff0;
    }
`

const RadioRow = styled.label`
    display: flex;
    align-items: center;
    gap: 10px;
    height: 40px;
`

const Radio = styled.input`
    appearance: none;
    width: 19px;
    height: 19px;
    margin: 0;
    border: 1px solid #707074;
    border-radius: 50%;
    background: #fff;
    &:checked {
        background: radial-gradient(circle, #26262a 4px, #fff 6px);
    }
`

const FieldRow = styled.div`
    display: flex;
    justify-content: space-between;
    align-items: flex-start;
    height: ${props => props.$tall ? '49px' : '41px'};
    padding-left: 63px;
`

const FieldLabel = styled.label`
    line-height: 43px;
    color: ${props => props.$off ? '#78787c' : '#101014'};
`

const TextBox = styled.input`
    width: 144px;
    height: 33px;
    padding: 0 4px 2px;
    border: 1px solid #9c9ca0;
    border-radius: 0;
    background: #fff;
    &:disabled {
        background: #f0eff1;
        border-color: #cbcbce;
    }
`

const PlainSelect = styled.select`
    appearance: none;
    width: ${props => props.$wide ? '304px' : '144px'};
    height: 40px;
    border: 1px solid #cbcbce;
    border-radius: 0;
    background: #f0eff1;
    &:disabled {
        opacity: 1;
    }
`

const ButtonRow = styled.div`
    display: flex;
    gap: 32px;
    margin-top: 16px;
`

const PushButton = styled.button.attrs({ type: 'button' })`
    width: ${props => props.$wide ? '320px' : '106px'};
    height: 40px;
    padding: 0;
    border: 1px solid #6c6c70;
    background: #dededf;
`

export default App;
